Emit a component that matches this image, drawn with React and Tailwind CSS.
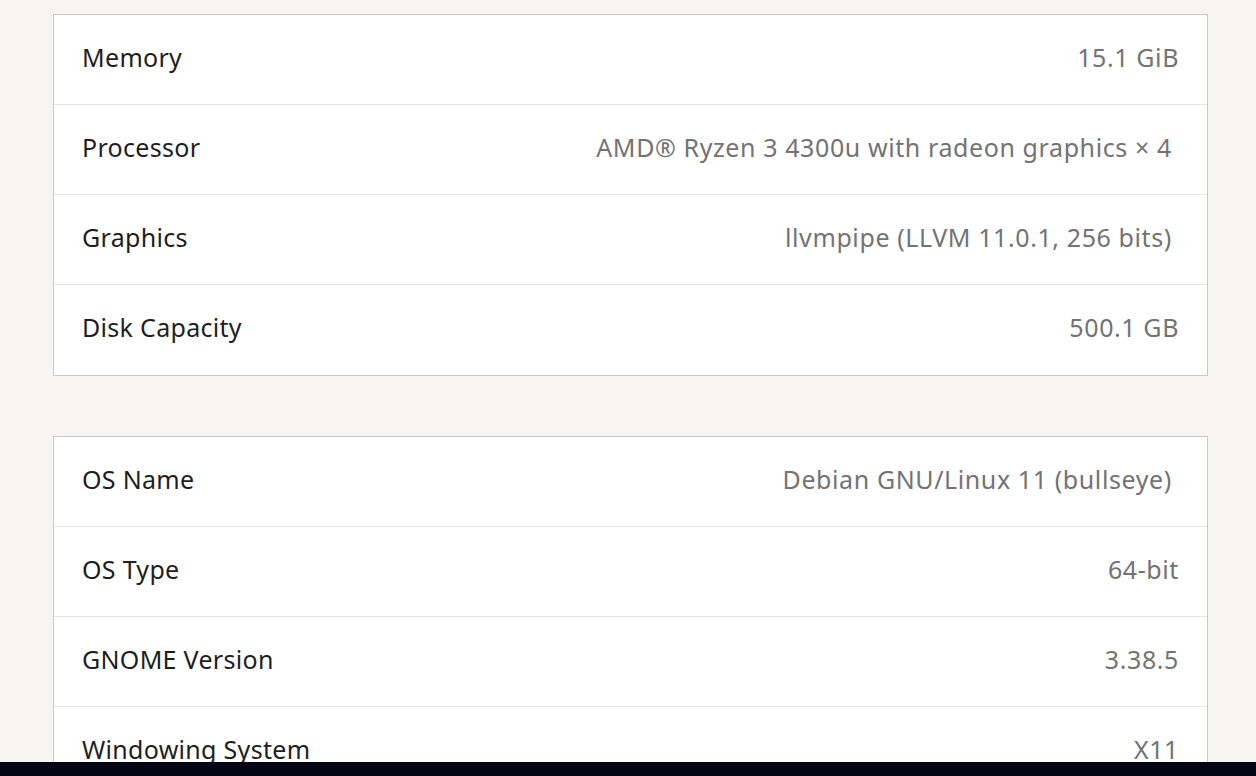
import React from "react";

const cards = [
  [
    ["Memory", "15.1 GiB"],
    ["Processor", "AMD® Ryzen 3 4300u with radeon graphics × 4 "],
    ["Graphics", "llvmpipe (LLVM 11.0.1, 256 bits) "],
    ["Disk Capacity", "500.1 GB"],
  ],
  [
    ["OS Name", "Debian GNU/Linux 11 (bullseye) "],
    ["OS Type", "64-bit"],
    ["GNOME Version", "3.38.5"],
    ["Windowing System", "X11"],
  ],
];

function Card({ rows, className }) {
  return (
    <div className={"ml-[53px] w-[1155px] shrink-0 border border-[#cdc7c2] bg-white " + className}>
      {rows.map(([k, v], i) => (
        <div
          key={k}
          className={
            "flex h-[90px] items-center justify-between px-[28px] pb-[4px] " +
            (i < rows.length - 1 ? "border-b border-[#e8e6e3]" : "")
          }
        >
          <span className="tracking-[0.3px] text-[#1e1e1e]">{k}</span>
          <span className="whitespace-pre tracking-[0.6px] text-[#737373]">{v}</span>
        </div>
      ))}
    </div>
  );
}

export default function App() {
  return (
    <div
      className="flex h-[776px] w-[1256px] flex-col overflow-hidden bg-[#f6f5f4] text-[25px]"
      style={{ fontFamily: '"Noto Sans", "Open Sans", sans-serif' }}
    >
      <div className="flex flex-1 flex-col overflow-hidden pt-[14px]">
        <Card rows={cards[0]} className="" />
        <Card rows={cards[1]} className="mt-[60px]" />
      </div>
      <div className="h-[14px] shrink-0 bg-[#030314]" />
    </div>
  );
}
